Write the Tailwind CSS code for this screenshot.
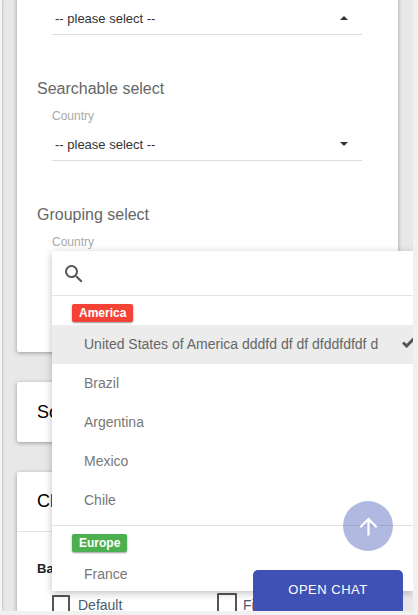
<html lang="en">
<head>
    <meta charset="utf-8" />
    <title>Select</title>
    <meta name="viewport" content="width=device-width, initial-scale=1" />
    <script src="https://cdn.jsdelivr.net/npm/@tailwindcss/browser@4"></script>
</head>
<body class="font-['Liberation_Sans',sans-serif] bg-[#f1f1f1]">
<div class="w-[418px] h-[615px] overflow-hidden bg-[#f1f1f1]">
    <div class="relative w-[413px] h-[611px] overflow-hidden bg-[#e8e8e8] flex">
        <!-- sidebar edge -->
        <div class="w-[2px] shrink-0 bg-[#f5f5f5] shadow-[0_0_3px_rgba(0,0,0,0.35)]"></div>

        <div class="w-[381px] ml-[15px] shrink-0">
            <!-- select card -->
            <div class="-mt-[10px] pt-[12px] pl-[35px] pr-[36px] pb-[102px] bg-white rounded-[2px] shadow-[0_1px_4px_rgba(0,0,0,0.35)]">
                <div class="h-[33px] border-b border-[#ddd] pl-[3px] pr-[14px] flex items-center justify-between text-[13px] text-[#333]">
                    <span class="mt-[1px]">-- please select --</span>
                    <svg class="w-[8px] h-[4px]" viewBox="0 0 8 4"><path d="M0 4 L4 0 L8 4 z" fill="#333"/></svg>
                </div>

                <h3 class="-ml-[15px] mt-[42px] h-[24px] leading-[24px] text-[16px] text-[#666]">Searchable select</h3>
                <div class="mt-[7px] h-[16px] leading-[16px] text-[12px] text-[#aaa]">Country</div>
                <div class="mt-[4px] h-[33px] border-b border-[#ddd] pl-[3px] pr-[14px] flex items-center justify-between text-[13px] text-[#333]">
                    <span class="mt-[1px]">-- please select --</span>
                    <svg class="w-[8px] h-[4px]" viewBox="0 0 8 4"><path d="M0 0 L8 0 L4 4 z" fill="#333"/></svg>
                </div>

                <h3 class="-ml-[15px] mt-[42px] h-[24px] leading-[24px] text-[16px] text-[#666]">Grouping select</h3>
                <div class="mt-[7px] h-[16px] leading-[16px] text-[12px] text-[#aaa]">Country</div>
            </div>

            <!-- second card -->
            <div class="mt-[30px] h-[60px] pl-[20px] flex items-center bg-white rounded-[2px] shadow-[0_1px_4px_rgba(0,0,0,0.35)]">
                <h2 class="text-[18px] text-black">Some select</h2>
            </div>

            <!-- checkbox card -->
            <div class="mt-[30px] bg-white rounded-[2px] shadow-[0_1px_4px_rgba(0,0,0,0.35)]">
                <div class="h-[60px] pl-[20px] flex items-center border-b border-[#e5e5e5]">
                    <h2 class="text-[18px] text-black">Checkbox</h2>
                </div>
                <div class="pl-[20px] pt-[27px]">
                    <div class="h-[20px] leading-[20px] text-[13px] font-bold text-[#222]">Basic</div>
                    <div class="mt-[14px] pl-[15px] flex text-[14px] text-[#4a5a70]">
                        <div class="w-[165px] flex items-start">
                            <span class="mt-[2px] w-[18px] h-[18px] border-2 border-[#555] rounded-[1px]"></span>
                            <span class="ml-[8px] mt-[2px]">Default</span>
                        </div>
                        <div class="flex items-start">
                            <span class="w-[20px] h-[20px] border-2 border-[#555] rounded-[1px]"></span>
                            <span class="ml-[6px] mt-[2px]">Filled</span>
                        </div>
                    </div>
                </div>
            </div>
        </div>

        <!-- open dropdown -->
        <div class="absolute left-[52px] top-[251px] w-[361px] h-[340px] overflow-hidden bg-white shadow-[0_2px_8px_rgba(0,0,0,0.25)]">
            <div class="h-[45px] pl-[10px] flex items-center border-b border-[#e5e5e5]">
                <svg class="mt-[1px] w-[24px] h-[24px]" viewBox="0 0 24 24"><path fill="#555" d="M15.5 14h-.79l-.28-.27A6.471 6.471 0 0 0 16 9.5 6.5 6.5 0 1 0 9.5 16c1.61 0 3.09-.59 4.23-1.57l.27.28v.79l5 4.99L20.49 19l-4.99-5zm-6 0C7.01 14 5 11.99 5 9.5S7.01 5 9.5 5 14 7.01 14 9.5 11.99 14 9.5 14z"/></svg>
            </div>
            <div class="h-[29px] pl-[20px] pt-[8px]">
                <span class="block w-fit h-[18px] leading-[18px] px-[7px] rounded-[2px] bg-[#f44336] text-white text-[12px] font-bold shadow-[0_1px_2px_rgba(0,0,0,0.4)]">America</span>
            </div>
            <ul class="text-[14px] text-[#777]">
                <li class="relative h-[39px] pl-[32px] flex items-center bg-[#ececec] text-[#666] whitespace-nowrap">
                    United States of America dddfd df df dfddfdfdf d
                    <svg class="absolute left-[350px] top-[12px] w-[13px] h-[11px]" viewBox="0 0 13 11"><path d="M1 5.5 L4.6 9 L12 1.5" fill="none" stroke="#555" stroke-width="3"/></svg>
                </li>
                <li class="h-[39px] pl-[32px] flex items-center">Brazil</li>
                <li class="h-[39px] pl-[32px] flex items-center">Argentina</li>
                <li class="h-[39px] pl-[32px] flex items-center">Mexico</li>
                <li class="h-[39px] pl-[32px] flex items-center">Chile</li>
            </ul>
            <div class="mt-[5px] border-t border-[#e0e0e0] h-[29px] pl-[20px] pt-[8px]">
                <span class="block w-fit h-[18px] leading-[18px] px-[7px] rounded-[2px] bg-[#4caf50] text-white text-[12px] font-bold shadow-[0_1px_2px_rgba(0,0,0,0.4)]">Europe</span>
            </div>
            <div class="h-[39px] pl-[32px] pt-[1px] flex items-center text-[14px] text-[#777]">France</div>
        </div>

        <!-- scroll to top -->
        <button class="absolute left-[343px] top-[501px] w-[50px] h-[50px] rounded-full bg-[#3f51b5]/40 flex items-center justify-center">
            <svg class="w-[27px] h-[27px]" viewBox="0 0 24 24"><path fill="#fff" d="M4 12l1.41 1.41L11 7.83V20h2V7.83l5.58 5.59L20 12l-8-8-8 8z"/></svg>
        </button>

        <!-- chat -->
        <button class="absolute left-[253px] top-[570px] w-[150px] h-[45px] pb-[6px] rounded-[5px] bg-[#3f51b5] text-white text-[13px] tracking-[0.5px]">OPEN CHAT</button>
    </div>
</div>
</body>
</html>
